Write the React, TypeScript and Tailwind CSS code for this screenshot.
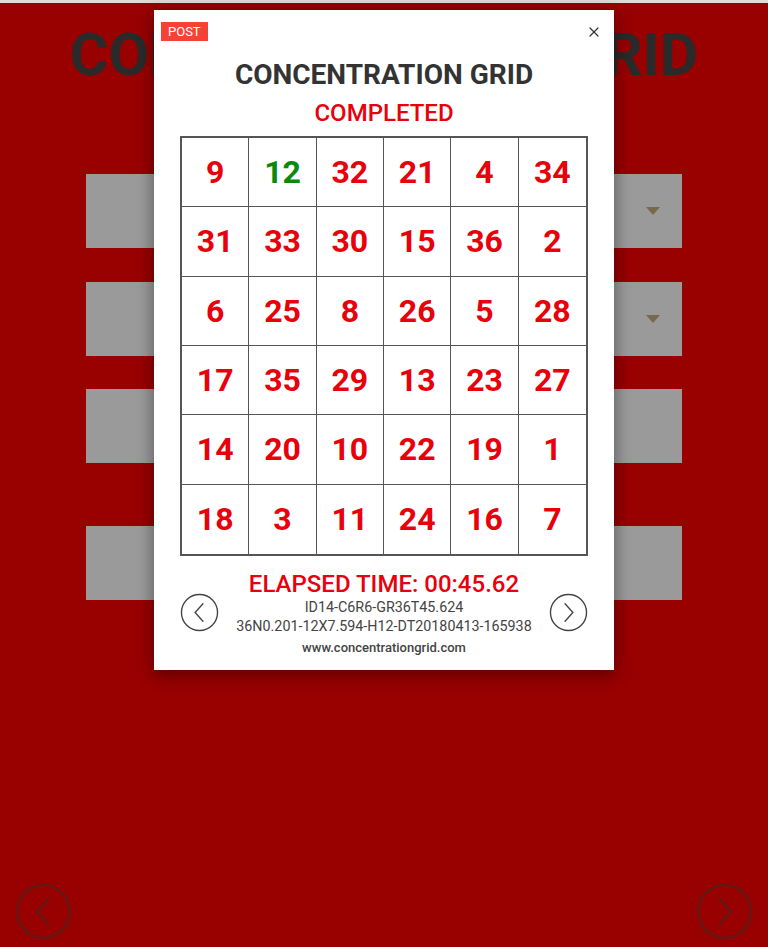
import { X } from "lucide-react";

const grid = [
  [9, 12, 32, 21, 4, 34],
  [31, 33, 30, 15, 36, 2],
  [6, 25, 8, 26, 5, 28],
  [17, 35, 29, 13, 23, 27],
  [14, 20, 10, 22, 19, 1],
  [18, 3, 11, 24, 16, 7],
];

function ArrowCircle({ dir, size, color, stroke }: { dir: "left" | "right"; size: number; color: string; stroke: number }) {
  return (
    <svg width={size} height={size} viewBox="0 0 40 40" fill="none" stroke={color} strokeWidth={stroke} strokeLinecap="round">
      <circle cx="20" cy="20" r="18.5" />
      {dir === "left" ? <path d="M23.5 11 L15.5 20 L23.5 29" /> : <path d="M16.5 11 L24.5 20 L16.5 29" />}
    </svg>
  );
}

function Dropdown({ arrow }: { arrow?: boolean }) {
  return (
    <div className="relative h-[74px] w-full bg-[#9a9a9a]">
      {arrow && (
        <div className="absolute right-[22px] top-[33px] h-0 w-0 border-x-[7px] border-t-[8px] border-x-transparent border-t-[#756b4c]" />
      )}
    </div>
  );
}

export default function App() {
  return (
    <div className="relative h-[947px] w-[768px] overflow-hidden bg-[#990000] font-['Roboto',sans-serif]">
      <div className="h-[3px] bg-[#dcdcdc]" />
      <h1 className="mt-[20px] text-center text-[59px] font-bold leading-[64px] text-[#2a2a2a]">CONCENTRATION GRID</h1>
      <div className="mx-[86px] mt-[87px] flex flex-col">
        <Dropdown arrow />
        <div className="h-[34px]" />
        <Dropdown arrow />
        <div className="h-[33px]" />
        <Dropdown />
        <div className="h-[63px]" />
        <Dropdown />
      </div>
      <div className="mt-[283px] flex justify-between px-[15px]">
        <ArrowCircle dir="left" size={57} color="#5e1b17" stroke={1.6} />
        <ArrowCircle dir="right" size={57} color="#5e1b17" stroke={1.6} />
      </div>

      <div className="absolute left-[154px] top-[10px] h-[660px] w-[460px] bg-white shadow-[0_4px_16px_rgba(0,0,0,0.45)]">
        <div className="flex items-start justify-between pl-[7px] pr-[12px] pt-[12px]">
          <span className="bg-[#f44336] px-[7px] text-[13px] leading-[19px] text-white">POST</span>
          <X className="mt-[2px] h-[16px] w-[16px] text-[#333]" strokeWidth={1.8} />
        </div>
        <div className="mt-[17px] text-center text-[28px] font-bold leading-[34px] text-[#333]">CONCENTRATION GRID</div>
        <div className="mt-[6px] text-center text-[24px] font-medium leading-[30px] text-[#e8000b]">COMPLETED</div>
        <div className="mx-[26px] mt-[8px] grid grid-cols-6 border-2 border-[#555]">
          {grid.flat().map((n, i) => (
            <div
              key={i}
              className={`flex h-[69.33px] items-center justify-center text-[32px] font-bold ${
                i % 6 !== 5 ? "border-r border-[#555]" : ""
              } ${i < 30 ? "border-b border-[#555]" : ""} ${n === 12 ? "text-[#0a8a0a]" : "text-[#e8000b]"}`}
            >
              {n}
            </div>
          ))}
        </div>
        <div className="mt-[14px] flex items-start justify-between px-[26px]">
          <div className="mt-[23px]">
            <ArrowCircle dir="left" size={39} color="#444" stroke={1.4} />
          </div>
          <div className="flex flex-col items-center">
            <div className="text-[24px] font-medium leading-[28px] text-[#e8000b]">ELAPSED TIME: 00:45.62</div>
            <div className="text-[14.3px] leading-[19px] text-[#444]">ID14-C6R6-GR36T45.624</div>
            <div className="text-[14.3px] leading-[19px] text-[#444]">36N0.201-12X7.594-H12-DT20180413-165938</div>
          </div>
          <div className="mt-[23px]">
            <ArrowCircle dir="right" size={39} color="#444" stroke={1.4} />
          </div>
        </div>
        <div className="mt-[3px] text-center text-[13px] font-medium leading-[18px] text-[#444]">www.concentrationgrid.com</div>
      </div>
    </div>
  );
}
